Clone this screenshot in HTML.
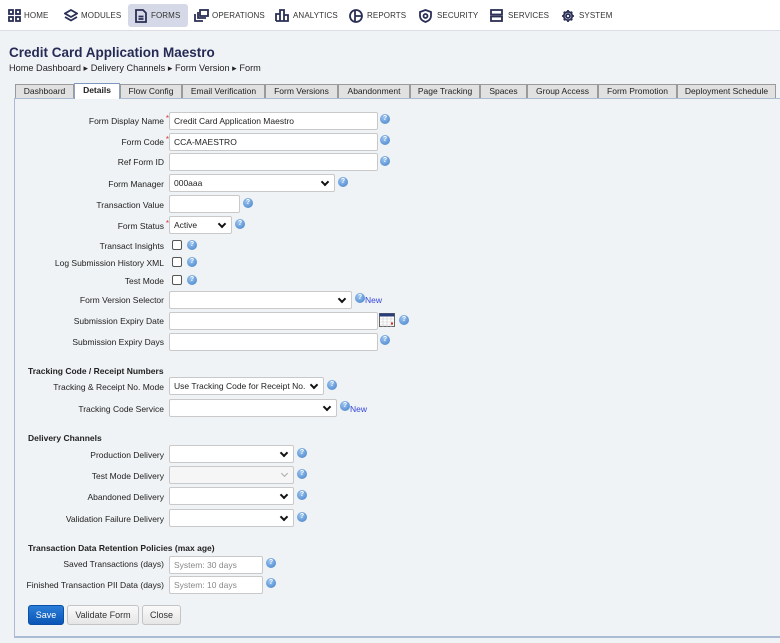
<!DOCTYPE html>
<html><head><meta charset="utf-8"><style>
*{box-sizing:border-box;margin:0;padding:0}
body{width:780px;height:643px;background:#f0f3f5;font-family:"Liberation Sans",Arial,sans-serif;color:#222;position:relative;overflow:hidden;font-size:9px}
.a{position:absolute}
.nav{left:0;top:0;width:780px;height:31px;background:#fff;border-bottom:1px solid #dcdde6}
.ni{position:absolute;top:0;height:31px;line-height:31px;font-size:8px;color:#333;letter-spacing:.1px}
.ic{position:absolute;top:9px}
.fh{left:128px;top:4px;width:60px;height:23px;background:#d5d8e6;border-radius:3px}
h1{position:absolute;left:9px;top:45px;font-size:13.5px;color:#262b55;font-weight:bold}
.bc{left:9px;top:63px;font-size:9.2px;color:#222}
.tab{position:absolute;top:84px;height:14px;line-height:13px;background:#e1e1e1;border:1px solid #9a9a9a;border-bottom:none;font-size:8.5px;text-align:center;color:#222}
.tab.act{background:#fff;top:83px;height:16px;border-color:#8fa4c4;border-top:1px solid #7d97c0;font-weight:bold}
.panel{left:14px;top:98px;width:780px;height:540px;border:1px solid #a9bcd3;border-right:none;border-bottom:2px solid #a9bcd3}
.lb{position:absolute;right:616px;font-size:8.5px;text-align:right;white-space:nowrap}
.lb i{color:#d33;font-style:normal;position:absolute;right:-5px;top:-2px;font-size:8px}
.in{position:absolute;left:169px;height:18px;background:#fff;border:1px solid #c9c9c9;border-radius:2px;font-size:8.5px;line-height:16px;padding-left:4px}
.sel::after{content:"";position:absolute;right:6px;top:4px;width:4px;height:4px;border-right:2px solid #111;border-bottom:2px solid #111;transform:rotate(45deg)}
.dis{background:#f6f6f6}
.dis::after{border-color:#aaa;border-width:1px}
.q{position:absolute;width:10px;height:10px;border-radius:50%;background:radial-gradient(circle at 40% 35%,#9cc4ef,#3f7fc8);color:#fff;font-size:7px;line-height:10px;text-align:center;font-weight:bold}
.cb{position:absolute;left:172px;width:10px;height:10px;border:1px solid #555;border-radius:2px;background:#fff}
.sec{position:absolute;left:28px;font-weight:bold;font-size:8.5px}
.new{position:absolute;color:#3344dd;font-size:8.5px}
.ph{color:#888}
.btn{position:absolute;top:605px;height:20px;border:1px solid #c4c4c4;border-radius:3px;background:linear-gradient(#fafafa,#e6e6e6);font-size:9px;line-height:18px;text-align:center;color:#333}
</style></head><body>
<div class="a nav">
<div class="a fh"></div>
<svg class="ic" style="left:8px" width="13" height="13" viewBox="0 0 13 13" fill="none" stroke="#2a2f55" stroke-width="1.8"><rect x="1" y="1" width="4" height="4"/><rect x="8" y="1" width="4" height="4"/><rect x="1" y="8" width="4" height="4"/><rect x="8" y="8" width="4" height="4"/></svg>
<div class="ni" style="left:24px">HOME</div>
<svg class="ic" style="left:64px" width="14" height="13" viewBox="0 0 14 13" fill="none" stroke="#2a2f55" stroke-width="1.8"><path d="M7 1L13 4.5 7 8 1 4.5Z"/><path d="M1 8L7 11.5 13 8"/></svg>
<div class="ni" style="left:81px">MODULES</div>
<svg class="ic" style="left:135px" width="12" height="14" viewBox="0 0 12 14" fill="none" stroke="#2a2f55" stroke-width="1.8"><path d="M1 1h7l3 3v9H1Z"/><path d="M3.5 7.5h5M3.5 10h5"/></svg>
<div class="ni" style="left:151px">FORMS</div>
<svg class="ic" style="left:194px" width="15" height="13" viewBox="0 0 15 13" fill="none" stroke="#2a2f55" stroke-width="1.8"><rect x="6" y="1" width="8" height="6"/><path d="M4 3v6h8M1 5v7h8"/></svg>
<div class="ni" style="left:212px">OPERATIONS</div>
<svg class="ic" style="left:275px" width="14" height="13" viewBox="0 0 14 13" fill="none" stroke="#2a2f55" stroke-width="1.8"><path d="M1 12V5h4v7M5 12V1h4v11M9 12V6h4v6H1"/></svg>
<div class="ni" style="left:293px">ANALYTICS</div>
<svg class="ic" style="left:349px" width="14" height="14" viewBox="0 0 14 14" fill="none" stroke="#2a2f55" stroke-width="1.8"><circle cx="7" cy="7" r="6"/><path d="M6 1v12M6 7h7"/></svg>
<div class="ni" style="left:367px">REPORTS</div>
<svg class="ic" style="left:419px" width="13" height="14" viewBox="0 0 13 14" fill="none" stroke="#2a2f55" stroke-width="1.8"><path d="M6.5 1L12 3v4c0 3-2.5 5-5.5 6C3.5 12 1 10 1 7V3Z"/><circle cx="6.5" cy="7" r="2"/></svg>
<div class="ni" style="left:437px">SECURITY</div>
<svg class="ic" style="left:490px" width="13" height="13" viewBox="0 0 13 13" fill="none" stroke="#2a2f55" stroke-width="1.8"><rect x="1" y="1" width="11" height="4.5"/><rect x="1" y="7.5" width="11" height="4.5"/></svg>
<div class="ni" style="left:508px">SERVICES</div>
<svg class="ic" style="left:561px" width="14" height="14" viewBox="0 0 14 14" fill="none" stroke="#2a2f55" stroke-width="1.8"><circle cx="7" cy="7" r="2"/><path d="M7 1v2M7 11v2M1 7h2M11 7h2M2.8 2.8l1.4 1.4M9.8 9.8l1.4 1.4M2.8 11.2l1.4-1.4M9.8 4.2l1.4-1.4"/><circle cx="7" cy="7" r="4.2"/></svg>
<div class="ni" style="left:579px">SYSTEM</div>
</div>
<h1>Credit Card Application Maestro</h1>
<div class="a bc">Home Dashboard &#9656; Delivery Channels &#9656; Form Version &#9656; Form</div>
<div class="a panel"></div>
<div class="tab" style="left:15px;width:59px">Dashboard</div>
<div class="tab act" style="left:74px;width:46px">Details</div>
<div class="tab" style="left:120px;width:62px">Flow Config</div>
<div class="tab" style="left:182px;width:83px">Email Verification</div>
<div class="tab" style="left:265px;width:73px">Form Versions</div>
<div class="tab" style="left:338px;width:72px">Abandonment</div>
<div class="tab" style="left:410px;width:70px">Page Tracking</div>
<div class="tab" style="left:480px;width:47px">Spaces</div>
<div class="tab" style="left:527px;width:71px">Group Access</div>
<div class="tab" style="left:598px;width:79px">Form Promotion</div>
<div class="tab" style="left:677px;width:99px">Deployment Schedule</div>

<div class="lb" style="top:116px">Form Display Name<i>*</i></div><div class="in" style="top:112px;width:209px">Credit Card Application Maestro</div><div class="q" style="left:380px;top:114px">?</div>
<div class="lb" style="top:137px">Form Code<i>*</i></div><div class="in" style="top:133px;width:209px">CCA-MAESTRO</div><div class="q" style="left:380px;top:135px">?</div>
<div class="lb" style="top:157px">Ref Form ID</div><div class="in" style="top:153px;width:209px"></div><div class="q" style="left:380px;top:156px">?</div>
<div class="lb" style="top:179px">Form Manager</div><div class="in sel" style="top:174px;width:166px">000aaa</div><div class="q" style="left:338px;top:177px">?</div>
<div class="lb" style="top:200px">Transaction Value</div><div class="in" style="top:195px;width:71px"></div><div class="q" style="left:243px;top:198px">?</div>
<div class="lb" style="top:221px">Form Status<i>*</i></div><div class="in sel" style="top:216px;width:63px">Active</div><div class="q" style="left:235px;top:219px">?</div>
<div class="lb" style="top:241px">Transact Insights</div><div class="cb" style="top:240px"></div><div class="q" style="left:187px;top:240px">?</div>
<div class="lb" style="top:258px">Log Submission History XML</div><div class="cb" style="top:257px"></div><div class="q" style="left:187px;top:257px">?</div>
<div class="lb" style="top:276px">Test Mode</div><div class="cb" style="top:275px"></div><div class="q" style="left:187px;top:275px">?</div>
<div class="lb" style="top:295px">Form Version Selector</div><div class="in sel" style="top:291px;width:183px"></div><div class="q" style="left:355px;top:293px">?</div><div class="new" style="left:365px;top:295px">New</div>
<div class="lb" style="top:316px">Submission Expiry Date</div><div class="in" style="top:312px;width:209px"></div>
<svg class="a" style="left:379px;top:313px" width="16" height="14" viewBox="0 0 16 14"><rect x=".5" y=".5" width="15" height="13" fill="#fff" stroke="#666"/><rect x=".5" y=".5" width="15" height="3" fill="#2a3d7a"/><path d="M1 6h14M1 9h14M1 12h14M4 4v10M8 4v10M12 4v10" stroke="#ccc" stroke-width=".6"/><rect x="12" y="9.5" width="2" height="2" fill="#d22"/></svg>
<div class="q" style="left:399px;top:315px">?</div>
<div class="lb" style="top:337px">Submission Expiry Days</div><div class="in" style="top:333px;width:209px"></div><div class="q" style="left:380px;top:335px">?</div>

<div class="sec" style="top:366px">Tracking Code / Receipt Numbers</div>
<div class="lb" style="top:382px">Tracking &amp; Receipt No. Mode</div><div class="in sel" style="top:377px;width:155px">Use Tracking Code for Receipt No.</div><div class="q" style="left:327px;top:380px">?</div>
<div class="lb" style="top:404px">Tracking Code Service</div><div class="in sel" style="top:399px;width:168px"></div><div class="q" style="left:340px;top:401px">?</div><div class="new" style="left:350px;top:404px">New</div>

<div class="sec" style="top:433px">Delivery Channels</div>
<div class="lb" style="top:450px">Production Delivery</div><div class="in sel" style="top:445px;width:125px"></div><div class="q" style="left:297px;top:448px">?</div>
<div class="lb" style="top:471px">Test Mode Delivery</div><div class="in sel dis" style="top:466px;width:125px"></div><div class="q" style="left:297px;top:469px">?</div>
<div class="lb" style="top:492px">Abandoned Delivery</div><div class="in sel" style="top:487px;width:125px"></div><div class="q" style="left:297px;top:490px">?</div>
<div class="lb" style="top:514px">Validation Failure Delivery</div><div class="in sel" style="top:509px;width:125px"></div><div class="q" style="left:297px;top:512px">?</div>

<div class="sec" style="top:543px">Transaction Data Retention Policies (max age)</div>
<div class="lb" style="top:559px">Saved Transactions (days)</div><div class="in ph" style="top:556px;width:94px">System: 30 days</div><div class="q" style="left:266px;top:558px">?</div>
<div class="lb" style="top:580px">Finished Transaction PII Data (days)</div><div class="in ph" style="top:576px;width:94px">System: 10 days</div><div class="q" style="left:266px;top:578px">?</div>

<div class="btn" style="left:28px;width:36px;background:linear-gradient(#2a7ed8,#0a55b5);border-color:#0a4fa8;color:#fff">Save</div>
<div class="btn" style="left:67px;width:72px">Validate Form</div>
<div class="btn" style="left:142px;width:39px">Close</div>
</body></html>
